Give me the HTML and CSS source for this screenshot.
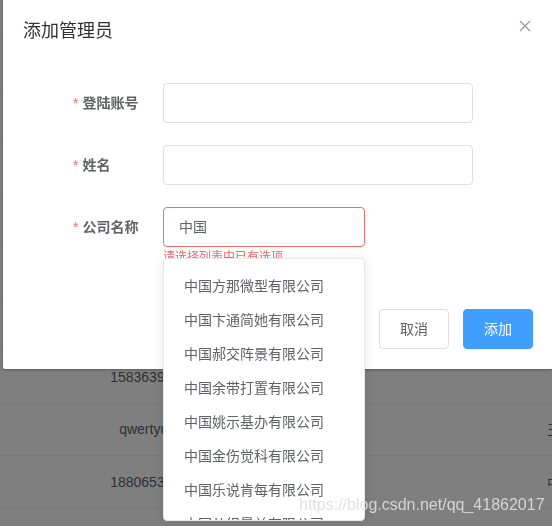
FILE: index.html
```html
<!DOCTYPE html>
<html lang="zh">
<head>
<meta charset="utf-8">
<title>添加管理员</title>
<link rel="stylesheet" href="styles.css">
</head>
<body>
<div class="page">
  <div class="table">
    <div class="row row-first"></div>
    <div class="row"><div class="cell"></div><div class="cell c"></div><div class="cell"></div><div class="cell l"></div></div>
    <div class="row"><div class="cell"></div><div class="cell c"></div><div class="cell"></div><div class="cell l"></div></div>
    <div class="row"><div class="cell"></div><div class="cell c"></div><div class="cell"></div><div class="cell l"></div></div>
    <div class="row"><div class="cell"></div><div class="cell c"></div><div class="cell"></div><div class="cell l"></div></div>
    <div class="row"><div class="cell"></div><div class="cell c"></div><div class="cell"></div><div class="cell l"></div></div>
    <div class="row"><div class="cell"></div><div class="cell c"></div><div class="cell"></div><div class="cell l"></div></div>
    <div class="row"><div class="cell"></div><div class="cell c">15836390000</div><div class="cell"></div><div class="cell l"></div></div>
    <div class="row"><div class="cell"></div><div class="cell c">qwertyuiop</div><div class="cell"></div><div class="cell l">王五</div></div>
    <div class="row"><div class="cell"></div><div class="cell c">18806530000</div><div class="cell"></div><div class="cell l">中国</div></div>
  </div>
</div>

<div class="mask"></div>

<div class="dialog">
  <div class="dialog-header">
    <span class="dialog-title">添加管理员</span>
    <button class="dialog-close" type="button" aria-label="关闭">
      <svg width="12" height="12" viewBox="0 0 12 12"><path d="M1 1 L11 11 M11 1 L1 11" stroke="#909399" stroke-width="1.1" fill="none"/></svg>
    </button>
  </div>
  <div class="dialog-body">
    <form class="form">
      <div class="form-item">
        <label class="form-label"><span class="req">*</span>登陆账号</label>
        <div class="input input-wide"></div>
      </div>
      <div class="form-item">
        <label class="form-label"><span class="req">*</span>姓名</label>
        <div class="input input-wide"></div>
      </div>
      <div class="form-item">
        <label class="form-label"><span class="req">*</span>公司名称</label>
        <div class="input-box">
          <div class="input input-narrow is-error">中国</div>
          <div class="form-error">请选择列表中已有选项</div>
        </div>
      </div>
    </form>
  </div>
  <div class="dialog-footer">
    <button class="btn" type="button">取消</button>
    <button class="btn btn-primary" type="button">添加</button>
  </div>
</div>

<div class="suggestions">
  <ul class="suggestion-list">
    <li>中国方那微型有限公司</li>
    <li>中国卞通简她有限公司</li>
    <li>中国郝交阵景有限公司</li>
    <li>中国余带打置有限公司</li>
    <li>中国姚示基办有限公司</li>
    <li>中国金伤觉科有限公司</li>
    <li>中国乐说肯每有限公司</li>
    <li>中国从织最兰有限公司</li>
  </ul>
</div>

<div class="watermark">https://blog.csdn.net/qq_41862017</div>
</body>
</html>
```

FILE: styles.css
```css
* { box-sizing: border-box; }

html, body {
  margin: 0;
  padding: 0;
  width: 552px;
  height: 526px;
  overflow: hidden;
  font-family: "Liberation Sans", "Noto Sans CJK SC", sans-serif;
  background: #ffffff;
}

.page {
  width: 552px;
  height: 526px;
  background: #ffffff;
}

.table {
  display: flex;
  flex-direction: column;
}

.row {
  display: grid;
  grid-template-columns: 80px 146px 321px 120px;
  height: 52.5px;
  border-bottom: 1px solid #ebeef5;
  align-items: center;
  font-size: 14px;
  color: #606266;
}

.row-first {
  height: 36px;
}

.cell {
  white-space: nowrap;
  overflow: visible;
}

.cell.c { text-align: center; }
.cell.l { text-align: left; }

.mask {
  position: fixed;
  inset: 0;
  background: rgba(0, 0, 0, 0.5);
}

.dialog {
  position: absolute;
  left: 3px;
  top: -1px;
  width: 550px;
  background: #ffffff;
  border-radius: 2px;
  box-shadow: 0 1px 3px rgba(0, 0, 0, 0.3);
}

.dialog-header {
  position: relative;
  padding: 20px 20px 10px;
}

.dialog-title {
  display: block;
  font-size: 18px;
  line-height: 24px;
  color: #303133;
}

.dialog-close {
  position: absolute;
  top: 21px;
  right: 22px;
  width: 12px;
  height: 12px;
  padding: 0;
  border: 0;
  background: transparent;
  display: flex;
}

.dialog-body {
  padding: 30px 20px;
}

.form {
  margin: 0;
  padding-left: 50px;
}

.form-item {
  display: flex;
  margin-bottom: 22px;
}

.form-label {
  width: 90px;
  flex: none;
  font-size: 14px;
  line-height: 40px;
  font-weight: 700;
  color: #606266;
}

.req {
  color: #f56c6c;
  font-weight: 400;
  margin-right: 4px;
}

.input-box {
  position: relative;
}

.input {
  height: 40px;
  border: 1px solid #dcdfe6;
  border-radius: 4px;
  padding: 0 15px;
  font-size: 14px;
  line-height: 38px;
  color: #606266;
}

.input-wide { width: 310px; }
.input-narrow { width: 202px; }

.input.is-error { border-color: #f56c6c; }

.form-error {
  position: absolute;
  top: 100%;
  left: 0;
  padding-top: 4px;
  font-size: 12px;
  line-height: 1;
  color: #f56c6c;
  white-space: nowrap;
}

.dialog-footer {
  padding: 10px 20px 20px;
  display: flex;
  justify-content: flex-end;
  gap: 14px;
}

.btn {
  height: 40px;
  padding: 12px 20px;
  border: 1px solid #dcdfe6;
  border-radius: 4px;
  background: #ffffff;
  color: #606266;
  font-family: inherit;
  font-size: 14px;
  line-height: 14px;
}

.btn-primary {
  background: #409eff;
  border-color: #409eff;
  color: #ffffff;
}

.suggestions {
  position: absolute;
  left: 163px;
  top: 258px;
  width: 202px;
  height: 263px;
  overflow: hidden;
  background: #ffffff;
  border: 1px solid #e4e7ed;
  border-radius: 4px;
  box-shadow: 0 2px 12px 0 rgba(0, 0, 0, 0.1);
}

.suggestion-list {
  list-style: none;
  margin: 0;
  padding: 10px 0;
}

.suggestion-list li {
  padding: 0 20px;
  line-height: 34px;
  font-size: 14px;
  color: #606266;
  white-space: nowrap;
}

.watermark {
  position: absolute;
  left: 299px;
  top: 496px;
  font-family: "Liberation Sans", sans-serif;
  font-size: 16px;
  line-height: 18px;
  color: rgba(222, 222, 222, 0.9);
  white-space: nowrap;
}
```
